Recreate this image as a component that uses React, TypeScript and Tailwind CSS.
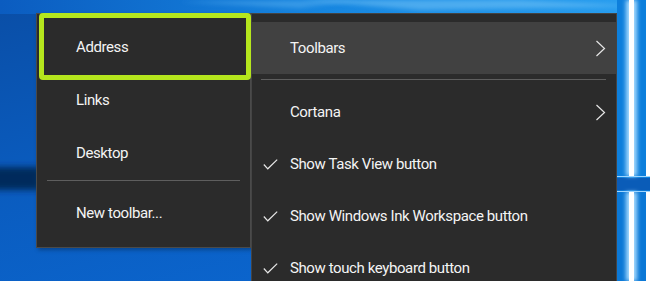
// Windows 10 wallpaper behind the menus
function Wallpaper() {
  return (
    <svg
      className="absolute inset-0"
      width="650"
      height="281"
      viewBox="0 0 650 281"
    >
      <defs>
        <linearGradient id="bg" x1="0" y1="0" x2="0.6" y2="1">
          <stop offset="0" stopColor="#0a4ea6" />
          <stop offset="0.5" stopColor="#0a5cbf" />
          <stop offset="1" stopColor="#0b66cf" />
        </linearGradient>
        <linearGradient id="top" x1="0" y1="0" x2="1" y2="0">
          <stop offset="0" stopColor="#0b5cc0" />
          <stop offset="0.5" stopColor="#1686e0" />
          <stop offset="1" stopColor="#2aa0f0" />
        </linearGradient>
        <filter id="blur" x="-50%" y="-50%" width="200%" height="200%">
          <feGaussianBlur stdDeviation="2" />
        </filter>
        <filter id="blur3" x="-50%" y="-50%" width="200%" height="200%">
          <feGaussianBlur stdDeviation="3" />
        </filter>
      </defs>
      <rect width="650" height="281" fill="url(#bg)" />
      <rect width="650" height="14" fill="url(#top)" />
      <path d="M300 0 L520 0 L640 6 L420 10 Z" fill="#7cc8f8" opacity="0.5" filter="url(#blur)" />
      <path d="M180 2 L360 0 L300 8 Z" fill="#5ab0f0" opacity="0.5" filter="url(#blur)" />
      <rect x="-10" y="167" width="50" height="23" fill="#032a5c" filter="url(#blur3)" />
      {/* window logo panes */}
      <rect x="617" y="0" width="33" height="178" fill="#0d7fdc" />
      <rect x="617" y="190" width="33" height="91" fill="#0b78d6" />
      <rect x="617" y="178" width="33" height="12" fill="#0a5cb8" />
      <rect x="626" y="0" width="11" height="176" fill="#a8dcff" filter="url(#blur)" />
      <rect x="629" y="0" width="5" height="176" fill="#ffffff" />
      <rect x="626" y="192" width="11" height="89" fill="#a8dcff" filter="url(#blur)" />
      <rect x="629" y="192" width="5" height="89" fill="#ffffff" />
      <rect x="646" y="0" width="4" height="176" fill="#ffffff" />
      <rect x="646" y="192" width="4" height="89" fill="#ffffff" />
      <rect x="617" y="176" width="33" height="1" fill="#9fd6ff" />
      <rect x="617" y="191" width="33" height="1" fill="#9fd6ff" />
    </svg>
  );
}

function Chevron() {
  return (
    <svg width="11" height="17" viewBox="0 0 11 17" className="shrink-0">
      <polyline points="1.5,1 9.5,8.5 1.5,16" fill="none" stroke="#e6e6e6" strokeWidth="1.2" />
    </svg>
  );
}

function Tick() {
  return (
    <svg width="15" height="11" viewBox="0 0 15 11" className="absolute left-[11px]">
      <polyline points="0.8,5.5 4.8,9.8 14.2,0.6" fill="none" stroke="#e6e6e6" strokeWidth="1.2" />
    </svg>
  );
}

const leftItem = "flex items-center pl-[39px] text-[15px] text-[#f4f4f4]";
const rightItem = "flex items-center h-[52px] pl-[38px] pr-[10px] text-[15px] text-[#f4f4f4]";

export default function App() {
  return (
    <div className="relative w-[650px] h-[281px] overflow-hidden font-['Segoe_UI',Roboto,sans-serif] tracking-[-0.4px]">
      <Wallpaper />

      <div className="relative flex items-start pt-[13px] pl-[36px]">
        {/* Toolbars submenu */}
        <div className="w-[215px] h-[235px] bg-[#2b2b2b] border border-[#4a4a4a] flex flex-col shadow-[2px_2px_4px_rgba(0,0,0,0.3)]">
          <div className="h-[67px] -mt-px ml-[2px] -mr-px shrink-0 border-[5px] border-[#b5e61d] rounded-[4px] flex items-center pl-[32px] pt-[2px] text-[15px] text-[#f4f4f4]">
            Address
          </div>
          <div className={`${leftItem} h-[46px] pb-[6px]`}>Links</div>
          <div className={`${leftItem} h-[54px]`}>Desktop</div>
          <div className="h-px mx-[10px] bg-[#5e5e5e]" />
          <div className={`${leftItem} h-[64px]`}>New toolbar...</div>
        </div>

        {/* Taskbar context menu */}
        <div className="w-[366px] h-[300px] bg-[#2b2b2b] border border-[#444] flex flex-col pt-[8px]">
          <div className={`${rightItem} h-[51px] bg-[#414141] justify-between`}>
            <span>Toolbars</span>
            <Chevron />
          </div>
          <div className="h-px mt-[5px] mb-[6px] ml-[9px] mr-[10px] bg-[#5e5e5e]" />
          <div className={`${rightItem} justify-between`}>
            <span>Cortana</span>
            <Chevron />
          </div>
          {["Show Task View button", "Show Windows Ink Workspace button", "Show touch keyboard button"].map((t) => (
            <div key={t} className={`${rightItem} relative`}>
              <Tick />
              <span>{t}</span>
            </div>
          ))}
        </div>
      </div>
    </div>
  );
}
